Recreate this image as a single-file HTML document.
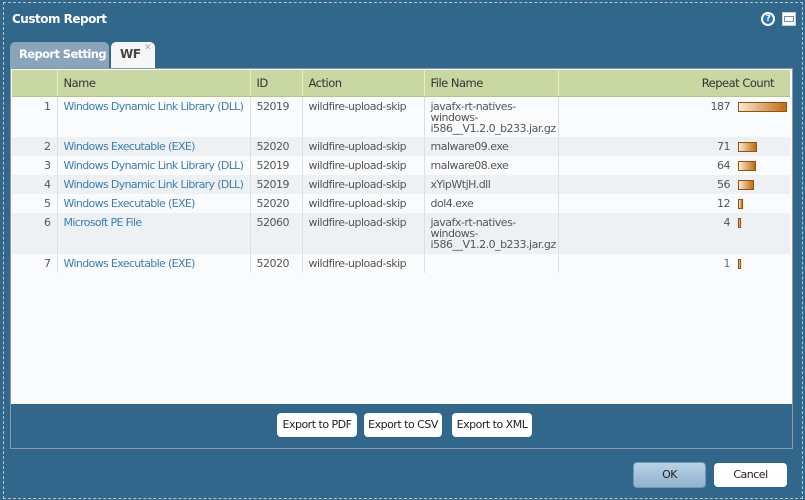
<!DOCTYPE html><html><head><style>
*{margin:0;padding:0;box-sizing:border-box}
body{width:805px;height:500px;background:#31678a;font-family:"DejaVu Sans","Liberation Sans",sans-serif;font-size:11px;position:relative;overflow:hidden;letter-spacing:-0.5px}
.dots{position:absolute;border:1px dashed #b8c4d0}
.a{position:absolute}
.title{left:12px;top:12px;color:#fff;font-weight:bold;font-size:12px}
.tab{top:42px;height:26px;border-radius:5px 5px 0 0;font-weight:bold;font-size:12px;padding:5px 0 0 9px;white-space:nowrap}
table{position:absolute;left:12px;top:70px;width:778px;border-collapse:collapse;background:#f9fbfd;table-layout:fixed}
td{color:#555;vertical-align:top;padding:4px 6px 0 6px;border-left:1px solid #dcdfe3;line-height:11px;white-space:nowrap;overflow:hidden}
th{background:#c9d7a3;height:26px;font-weight:normal;text-align:left;padding:0 6px;color:#333;border-left:1px solid #e4ecd0;border-bottom:1px solid #b3c38a;font-size:11.5px}
tr.g td{background:#eef1f4}
td.n{text-align:right;border-left:none}
td.l{color:#3b7eb1;letter-spacing:-0.65px}
td.r{position:relative}
.num{position:absolute;right:60px;top:4px}
.bar{position:absolute;left:179px;top:5px;height:10px;border:1px solid #9a5008;background:linear-gradient(90deg,#fbe9d2,#c06d10)}
.btn{position:absolute;background:#fff;border-radius:4px;height:24px;text-align:center;line-height:24px;color:#222}
</style></head><body>
<div class="dots" style="left:3px;top:2px;width:800px;height:497px"></div>
<div class="a title">Custom Report</div>
<div class="a" style="left:761px;top:12px;width:14px;height:14px;border-radius:50%;background:#fff;"><div style="margin:2px;width:10px;height:10px;border-radius:50%;background:#2f73b5;color:#fff;font-size:9px;font-weight:bold;text-align:center;line-height:10px">?</div></div>
<div class="a" style="left:782px;top:12px;width:14px;height:14px;background:#fff;border:1px solid #ccd"><div style="margin:3px 1px;height:6px;border:1px solid #7a8ea0"></div></div>
<div class="a tab" style="left:10px;width:99px;background:#8aa5bb;color:#fff;font-size:11.5px;letter-spacing:-0.6px">Report Setting</div>
<div class="a tab" style="left:111px;width:44px;background:#f4f6f8;color:#444">WF<span style="position:absolute;left:33px;top:1px;font-size:9px;color:#aaa">✕</span></div>
<div class="a" style="left:10px;top:68px;width:783px;height:381px;border:1px solid #8a9aa8;background:#f9fbfd"></div>
<div class="a" style="left:11px;top:404px;width:781px;height:44px;background:#31678a"></div>
<table>
<colgroup><col style="width:45px"><col style="width:193px"><col style="width:52px"><col style="width:122px"><col style="width:134px"><col style="width:232px"></colgroup>
<tr><th style="border-left:none"></th><th>Name</th><th>ID</th><th>Action</th><th>File Name</th><th style="text-align:right;padding-right:16px">Repeat Count</th></tr>
<tr style="height:41px"><td class="n">1</td><td class="l">Windows Dynamic Link Library (DLL)</td><td>52019</td><td>wildfire-upload-skip</td><td>javafx-rt-natives-<br>windows-<br>i586__V1.2.0_b233.jar.gz</td><td class="r"><span class="num">187</span><span class="bar" style="width:49px"></span></td></tr>
<tr class="g" style="height:19px"><td class="n">2</td><td class="l">Windows Executable (EXE)</td><td>52020</td><td>wildfire-upload-skip</td><td>malware09.exe</td><td class="r"><span class="num">71</span><span class="bar" style="width:19px"></span></td></tr>
<tr style="height:19px"><td class="n">3</td><td class="l">Windows Dynamic Link Library (DLL)</td><td>52019</td><td>wildfire-upload-skip</td><td>malware08.exe</td><td class="r"><span class="num">64</span><span class="bar" style="width:18px"></span></td></tr>
<tr class="g" style="height:19px"><td class="n">4</td><td class="l">Windows Dynamic Link Library (DLL)</td><td>52019</td><td>wildfire-upload-skip</td><td>xYipWtjH.dll</td><td class="r"><span class="num">56</span><span class="bar" style="width:16px"></span></td></tr>
<tr style="height:19px"><td class="n">5</td><td class="l">Windows Executable (EXE)</td><td>52020</td><td>wildfire-upload-skip</td><td>dol4.exe</td><td class="r"><span class="num">12</span><span class="bar" style="width:5px"></span></td></tr>
<tr class="g" style="height:41px"><td class="n">6</td><td class="l">Microsoft PE File</td><td>52060</td><td>wildfire-upload-skip</td><td>javafx-rt-natives-<br>windows-<br>i586__V1.2.0_b233.jar.gz</td><td class="r"><span class="num">4</span><span class="bar" style="width:3px"></span></td></tr>
<tr style="height:19px"><td class="n">7</td><td class="l">Windows Executable (EXE)</td><td>52020</td><td>wildfire-upload-skip</td><td></td><td class="r"><span class="num" style="color:#3b7eb1">1</span><span class="bar" style="width:3px"></span></td></tr>
</table>
<div class="btn" style="left:277px;top:413px;width:80px">Export to PDF</div>
<div class="btn" style="left:364px;top:413px;width:78px">Export to CSV</div>
<div class="btn" style="left:452px;top:413px;width:80px">Export to XML</div>
<div class="btn" style="left:633px;top:462px;width:73px;height:26px;line-height:24px;background:linear-gradient(#b9d2e4,#8fb3cd);border:1px solid #6f9ab8">OK</div>
<div class="btn" style="left:714px;top:463px;width:73px">Cancel</div>
</body></html>
